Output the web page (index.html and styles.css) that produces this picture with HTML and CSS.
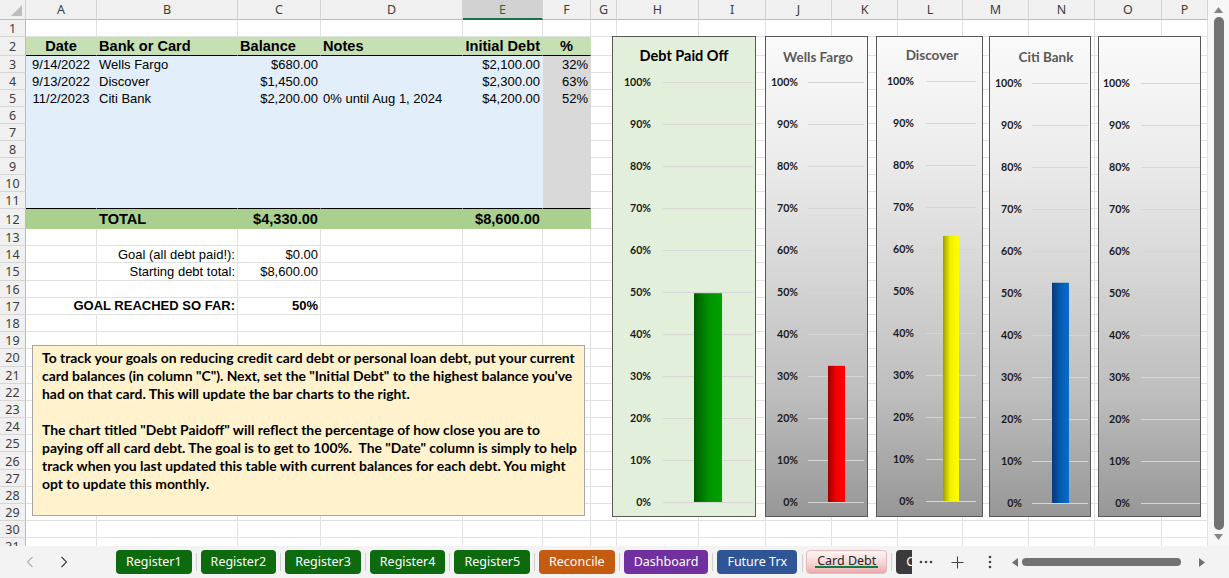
FILE: index.html
```html
<!DOCTYPE html>
<html lang="en">
<head>
    <meta charset="UTF-8">
    <meta name="viewport" content="width=device-width, initial-scale=1.0">
    <title>Card Debt</title>
    <link rel="stylesheet" href="styles.css">
</head>
<body>
    <div class="app">
        <div class="workspace">
            <div class="sheet-area">
                <div class="grid" id="sheet"></div>

                <div class="note">
                    To track your goals on reducing credit card debt or personal loan debt, put your current<br>
                    card balances (in column "C"). Next, set the "Initial Debt" to the highest balance you've<br>
                    had on that card. This will update the bar charts to the right.<br>
                    <br>
                    The chart titled "Debt Paidoff" will reflect the percentage of how close you are to<br>
                    paying off all card debt. The goal is to get to 100%.&nbsp; The "Date" column is simply to help<br>
                    track when you last updated this table with current balances for each debt. You might<br>
                    opt to update this monthly.
                </div>

                <div class="chart chart-paid"></div>
                <div class="chart chart-wells"></div>
                <div class="chart chart-discover"></div>
                <div class="chart chart-citi"></div>
                <div class="chart chart-blank"></div>
            </div>
            <div class="vscroll">
                <svg class="arrow" width="9" height="6" viewBox="0 0 9 6"><path d="M0 6 L4.5 0 L9 6 Z" fill="#858585"/></svg>
                <div class="vthumb"></div>
                <svg class="arrow" width="9" height="6" viewBox="0 0 9 6"><path d="M0 0 L4.5 6 L9 0 Z" fill="#858585"/></svg>
            </div>
        </div>

        <div class="tabbar">
            <div class="tab-nav">
                <svg width="8" height="12" viewBox="0 0 8 12"><path d="M6.5 1 L1.5 6 L6.5 11" fill="none" stroke="#b4b4b4" stroke-width="1.2"/></svg>
                <svg width="8" height="12" viewBox="0 0 8 12"><path d="M1.5 1 L6.5 6 L1.5 11" fill="none" stroke="#404040" stroke-width="1.2"/></svg>
            </div>
            <div class="tabs">
                <span class="tab tab-green">Register1</span>
                <span class="tab tab-green">Register2</span>
                <span class="tab tab-green">Register3</span>
                <span class="tab tab-green">Register4</span>
                <span class="tab tab-green">Register5</span>
                <span class="tab tab-orange">Reconcile</span>
                <span class="tab tab-purple">Dashboard</span>
                <span class="tab tab-blue">Future Trx</span>
                <span class="tab tab-active">Card Debt</span>
                <span class="tab tab-dark">Categories</span>
            </div>
            <div class="tab-tools">
                <svg width="14" height="4" viewBox="0 0 14 4"><circle cx="2" cy="2" r="1.3" fill="#444"/><circle cx="7" cy="2" r="1.3" fill="#444"/><circle cx="12" cy="2" r="1.3" fill="#444"/></svg>
                <svg width="13" height="13" viewBox="0 0 13 13"><path d="M6.5 0.5 V12.5 M0.5 6.5 H12.5" stroke="#444" stroke-width="1.1"/></svg>
                <svg class="more" width="4" height="14" viewBox="0 0 4 14"><circle cx="2" cy="2" r="1.3" fill="#444"/><circle cx="2" cy="7" r="1.3" fill="#444"/><circle cx="2" cy="12" r="1.3" fill="#444"/></svg>
            </div>
            <div class="hscroll">
                <svg width="6" height="9" viewBox="0 0 6 9"><path d="M6 0 L0 4.5 L6 9 Z" fill="#707070"/></svg>
                <div class="hthumb"></div>
                <svg width="6" height="9" viewBox="0 0 6 9"><path d="M0 0 L6 4.5 L0 9 Z" fill="#707070"/></svg>
            </div>
        </div>
    </div>

    <script>
        const COLS = 'ABCDEFGHIJKLMNOP'.split('');

        // cell text and alignment, by row then column
        const cells = {
            2: { A: ['Date', 'c b big'], B: ['Bank or Card', 'b big'], C: ['Balance', 'b big'], D: ['Notes', 'b big'], E: ['Initial Debt', 'r b big'], F: ['%', 'c b big'] },
            3: { A: ['9/14/2022', 'c'], B: ['Wells Fargo', ''], C: ['$680.00', 'r'], E: ['$2,100.00', 'r'], F: ['32%', 'r'] },
            4: { A: ['9/13/2022', 'c'], B: ['Discover', ''], C: ['$1,450.00', 'r'], E: ['$2,300.00', 'r'], F: ['63%', 'r'] },
            5: { A: ['11/2/2023', 'c'], B: ['Citi Bank', ''], C: ['$2,200.00', 'r'], D: ['0% until Aug 1, 2024', ''], E: ['$4,200.00', 'r'], F: ['52%', 'r'] },
            12: { B: ['TOTAL', 'b big'], C: ['$4,330.00', 'r b big'], E: ['$8,600.00', 'r b big'] },
            14: { B: ['Goal (all debt paid!):', 'r'], C: ['$0.00', 'r'] },
            15: { B: ['Starting debt total:', 'r'], C: ['$8,600.00', 'r'] },
            17: { A: ['', 'no-r'], B: ['GOAL REACHED SO FAR:', 'r b'], C: ['50%', 'r b'] }
        };

        const sheet = document.getElementById('sheet');

        function addCell(text, cls) {
            const d = document.createElement('div');
            d.className = cls;
            d.textContent = text;
            sheet.appendChild(d);
        }

        function fillFor(r, ci) {
            if (ci > 5) return '';
            if (r === 2) return ' f-head';
            if (r >= 3 && r <= 11) return ci === 5 ? ' f-gray' : ' f-data';
            if (r === 12) return ' f-total';
            return '';
        }

        addCell('', 'ch corner');
        COLS.forEach(c => addCell(c, c === 'E' ? 'ch selected' : 'ch'));

        for (let r = 1; r <= 31; r++) {
            addCell(r, 'rh');
            COLS.forEach((c, ci) => {
                const entry = (cells[r] && cells[r][c]) || ['', ''];
                let cls = 'cell ' + entry[1] + fillFor(r, ci);
                if ((r === 2 || r === 11) && ci <= 5) cls += ' rule';
                addCell(entry[0], cls);
            });
        }

        // bar charts
        const BARS = {
            green: [[0, '#005a00'], [0.55, '#009400'], [1, '#00a200']],
            red: [[0, '#a00000'], [0.5, '#f20000'], [1, '#ff0000']],
            yellow: [[0, '#9c9c00'], [0.45, '#f0f000'], [1, '#ffff00']],
            blue: [[0, '#0c3777'], [0.5, '#005cb0'], [1, '#0a6cca']]
        };

        const charts = [
            { id: 'paid', title: 'Debt Paid Off', titleX: 71, titleY: 24, labelX: 38, gx1: 50, gx2: 140, barX: 81, barW: 28, pct: 1 - 4330 / 8600, bar: 'green', dy: 0 },
            { id: 'wells', title: 'Wells Fargo', titleX: 52, titleY: 25, labelX: 32, gx1: 42, gx2: 98, barX: 62, barW: 17, pct: 680 / 2100, bar: 'red', dy: 0 },
            { id: 'discover', title: 'Discover', titleX: 55, titleY: 23, labelX: 37, gx1: 49, gx2: 99, barX: 66, barW: 16, pct: 1450 / 2300, bar: 'yellow', dy: -1 },
            { id: 'citi', title: 'Citi Bank', titleX: 56, titleY: 25, labelX: 32, gx1: 42, gx2: 98, barX: 62, barW: 17, pct: 2200 / 4200, bar: 'blue', dy: 1 },
            { id: 'blank', title: '', labelX: 31, gx1: 42, gx2: 101, dy: 1 }
        ];

        function drawChart(c) {
            const el = document.querySelector('.chart-' + c.id);
            const w = el.clientWidth, h = el.clientHeight;
            const top = 44.5, step = 42.05, base = top + 10 * step;
            let s = `<svg width="${w}" height="${h}" viewBox="0 0 ${w} ${h}">`;
            if (c.bar) {
                s += `<defs><linearGradient id="bar-${c.id}" x1="0" x2="1" y1="0" y2="0">`;
                BARS[c.bar].forEach(st => { s += `<stop offset="${st[0]}" stop-color="${st[1]}"/>`; });
                s += '</linearGradient></defs>';
            }
            if (c.title) {
                s += `<text class="chart-title" x="${c.titleX}" y="${c.titleY}" text-anchor="middle">${c.title}</text>`;
            }
            for (let i = 0; i <= 10; i++) {
                const y = Math.round(top + (10 - i) * step + c.dy) + 0.5;
                s += `<line x1="${c.gx1}" x2="${c.gx2}" y1="${y}" y2="${y}" stroke="#d6d6d6" stroke-width="1"/>`;
                s += `<text class="axis" x="${c.labelX}" y="${y + 3.5}" text-anchor="end">${i * 10}%</text>`;
            }
            if (c.bar) {
                const bh = c.pct * (base - top);
                s += `<rect x="${c.barX}" y="${base - bh + c.dy}" width="${c.barW}" height="${bh}" fill="url(#bar-${c.id})"/>`;
            }
            s += '</svg>';
            el.innerHTML = s;
        }

        charts.forEach(drawChart);
    </script>
</body>
</html>
```

FILE: styles.css
```css
body {
    margin: 0;
    padding: 0;
    background: #fff;
    overflow: hidden;
}

.app {
    width: 1229px;
    height: 578px;
    display: flex;
    flex-direction: column;
    overflow: hidden;
}

.workspace {
    display: flex;
    height: 546px;
    overflow: hidden;
}

.sheet-area {
    position: relative;
    width: 1208px;
    height: 546px;
    overflow: hidden;
}

/* spreadsheet grid */
.grid {
    display: grid;
    grid-template-columns: 26px 71px 141px 83px 142px 80px 48px 26px 82px 67px 66px 66px 65px 66px 66px 67px 46px;
    grid-template-rows: 20px 17px 19px repeat(9, 17px) 20px repeat(19, 17.2px);
}

.ch,
.rh {
    box-sizing: border-box;
    display: flex;
    align-items: center;
    justify-content: center;
    background: #f0f0f0;
    color: #3c3c3c;
    font-family: "Noto Sans", "Open Sans", sans-serif;
    font-size: 12.5px;
}

.ch {
    border-right: 1px solid #d4d4d4;
    border-bottom: 1px solid #bcbcbc;
}

.ch.selected {
    background: #d2d2d2;
    color: #1e6b3c;
    border-bottom: 2px solid #1e7145;
}

.corner {
    position: relative;
}

.corner::after {
    content: '';
    position: absolute;
    right: 3px;
    bottom: 3px;
    border-left: 11px solid transparent;
    border-bottom: 11px solid #bcbcbc;
}

.rh {
    border-right: 1px solid #bcbcbc;
    border-bottom: 1px solid #d6d6d6;
    padding-top: 1px;
}

.cell {
    box-sizing: border-box;
    display: flex;
    align-items: center;
    padding: 0 2px;
    min-width: 0;
    white-space: nowrap;
    border-right: 1px solid #e1e1e1;
    border-bottom: 1px solid #e1e1e1;
    font-family: "Liberation Sans", Arial, sans-serif;
    font-size: 13px;
    color: #000;
}

.cell.c { justify-content: center; }
.cell.r { justify-content: flex-end; }
.cell.b { font-weight: bold; }
.cell.big { font-size: 14.6px; }
.cell.no-r { border-right-color: transparent; }

.f-head { background: #c6e0b4; border-color: #c6e0b4; }
.f-data { background: #e2eef9; border-color: #e2eef9; }
.f-gray { background: #d9d9d9; border-color: #d9d9d9; }
.f-total { background: #a9d08e; border-color: #a9d08e; }

.cell.rule { border-bottom: 1px solid #000; }

/* text box */
.note {
    position: absolute;
    left: 32px;
    top: 345px;
    width: 553px;
    height: 171px;
    box-sizing: border-box;
    padding: 3px 9px;
    background: #fff2cc;
    border: 1px solid #a6a6a6;
    font-family: Lato, "Liberation Sans", sans-serif;
    font-weight: bold;
    font-size: 13.9px;
    line-height: 18px;
    color: #000;
    white-space: nowrap;
}

/* charts */
.chart {
    position: absolute;
    top: 36px;
    height: 481px;
    box-sizing: border-box;
    border: 1px solid #595959;
    background: linear-gradient(#fafafa 0%, #ececec 25%, #dadada 45%, #bdbdbd 75%, #979797 100%);
}

.chart svg {
    display: block;
}

.chart-paid { left: 612px; width: 144px; background: #e2efda; }
.chart-wells { left: 765px; width: 103px; }
.chart-discover { left: 876px; width: 107px; }
.chart-citi { left: 989px; width: 102px; }
.chart-blank { left: 1098px; width: 103px; }

.chart-title {
    font-family: Lato, sans-serif;
    font-weight: bold;
    font-size: 13.5px;
    fill: #595959;
}

.chart-paid .chart-title {
    font-size: 14.5px;
    fill: #000;
}

.axis {
    font-family: Lato, sans-serif;
    font-weight: bold;
    font-size: 10.6px;
    fill: #1a1a1a;
}

/* vertical scrollbar */
.vscroll {
    width: 21px;
    background: #f7f7f7;
    display: flex;
    flex-direction: column;
    align-items: center;
    padding: 7px 0 6px 0;
    box-sizing: border-box;
}

.vthumb {
    flex: 1;
    width: 10px;
    margin: 4px 0;
    background: #727272;
    border-radius: 5px;
}

/* sheet tabs */
.tabbar {
    height: 32px;
    display: flex;
    align-items: center;
    background: #f3f3f3;
}

.tab-nav {
    width: 116px;
    display: flex;
    align-items: center;
    gap: 26px;
    padding-left: 26px;
    box-sizing: border-box;
}

.tabs {
    width: 796px;
    display: flex;
    gap: 9px;
    overflow: hidden;
}

.tab {
    position: relative;
    flex-shrink: 0;
    height: 24px;
    line-height: 24px;
    padding: 0 10px;
    border-radius: 4px;
    color: #fff;
    font-family: "Noto Sans", "Open Sans", sans-serif;
    font-size: 12.5px;
}

.tab + .tab::before {
    content: '';
    position: absolute;
    left: -5px;
    top: 3px;
    height: 18px;
    border-left: 1px solid #d0d0d0;
}

.tab-green { background: #0e6a0e; }
.tab-orange { background: #c55a11; }
.tab-purple { background: #7030a0; }
.tab-blue { background: #2f5597; }
.tab-dark { background: #3a3a3a; }

.tab-active {
    color: #262626;
    line-height: 20px;
    height: 24px;
    box-sizing: border-box;
    border: 1px solid #eab9b9;
    background: linear-gradient(#fff6f6, #f6d2d2 60%, #eaa9a9);
}

.tab-active::after {
    content: '';
    position: absolute;
    left: 8px;
    right: 8px;
    bottom: 5px;
    height: 2px;
    background: #107c41;
}

.tab-tools {
    display: flex;
    align-items: center;
    gap: 18px;
    padding-left: 7px;
    width: 98px;
    box-sizing: border-box;
}

.tab-tools .more {
    margin-left: 6px;
}

.hscroll {
    display: flex;
    align-items: center;
    gap: 4px;
    padding-left: 2px;
}

.hthumb {
    width: 159px;
    height: 8px;
    border-radius: 4px;
    background: #727272;
    margin-right: 14px;
}
```
